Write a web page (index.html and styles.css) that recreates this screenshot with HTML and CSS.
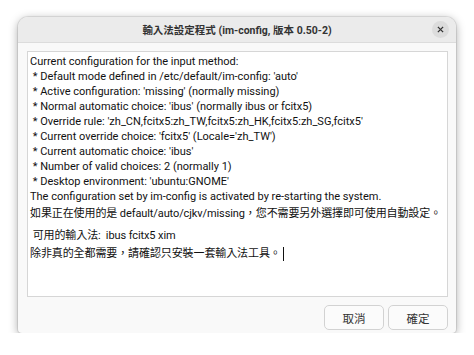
FILE: index.html
```html
<!DOCTYPE html>
<html lang="zh-TW">
<head>
    <meta charset="UTF-8">
    <title>im-config</title>
    <link rel="stylesheet" href="styles.css">
</head>
<body>
<div id="dialog">
    <div id="titlebar">
        <span id="title">輸入法設定程式 (im-config, 版本 0.50-2)</span>
        <span id="close_btn">
            <svg width="7" height="7" viewBox="0 0 8 8"><path d="M1 1L7 7M7 1L1 7" stroke="#333" stroke-width="1.5"/></svg>
        </span>
    </div>
    <div id="content">
        <div id="textview">
            <div class="line">Current configuration for the input method:</div>
            <div class="line"> * Default mode defined in /etc/default/im-config: 'auto'</div>
            <div class="line"> * Active configuration: 'missing' (normally missing)</div>
            <div class="line"> * Normal automatic choice: 'ibus' (normally ibus or fcitx5)</div>
            <div class="line"> * Override rule: 'zh_CN,fcitx5:zh_TW,fcitx5:zh_HK,fcitx5:zh_SG,fcitx5'</div>
            <div class="line"> * Current override choice: 'fcitx5' (Locale='zh_TW')</div>
            <div class="line"> * Current automatic choice: 'ibus'</div>
            <div class="line"> * Number of valid choices: 2 (normally 1)</div>
            <div class="line"> * Desktop environment: 'ubuntu:GNOME'</div>
            <div class="line">The configuration set by im-config is activated by re-starting the system.</div>
            <div class="line cjk">如果正在使用的是 default/auto/cjkv/missing，您不需要另外選擇即可使用自動設定。</div>
            <div class="line cjk tall"> 可用的輸入法:  ibus fcitx5 xim</div>
            <div class="line cjk last">除非真的全都需要，請確認只安裝一套輸入法工具。<span class="caret"></span></div>
        </div>
        <div id="buttons">
            <span class="btn">取消</span>
            <span class="btn">確定</span>
        </div>
    </div>
</div>
</body>
</html>
```

FILE: styles.css
```css
body {
    margin: 0;
    background-color: #ffffff;
    font-family: Roboto, "Noto Sans CJK TC", sans-serif;
    color: #2e2e2e;
}

#dialog {
    margin: 17px 0 0 18px;
    width: 438px;
    height: 316px;
    background-color: #f9f9f9;
    border-radius: 10px 10px 4px 4px;
    box-shadow: 0 2px 10px rgba(0, 0, 0, 0.35), 0 0 0 1px rgba(0, 0, 0, 0.08);
    display: flex;
    flex-direction: column;
    overflow: hidden;
}

#titlebar {
    height: 25px;
    background-color: #ebebeb;
    border-bottom: 1px solid #dcdcdc;
    display: flex;
    align-items: center;
    justify-content: center;
    position: relative;
}

#title {
    font-weight: bold;
    font-size: 10.5px;
    color: #333;
}

#close_btn {
    position: absolute;
    right: 7px;
    top: 4px;
    width: 17px;
    height: 17px;
    border-radius: 50%;
    background-color: #dcdcdc;
    display: flex;
    align-items: center;
    justify-content: center;
}

#content {
    padding: 8px 8px 0 9px;
    display: flex;
    flex-direction: column;
}

#textview {
    height: 240px;
    background-color: #ffffff;
    border: 1px solid #d6d6d6;
    padding: 2px;
    font-size: 11px;
    color: #111;
}

.line {
    height: 15px;
    line-height: 15px;
    white-space: pre;
}

.cjk {
    height: 18px;
    line-height: 18px;
    margin-top: 1px;
    letter-spacing: -0.1px;
}

.tall {
    height: 22px;
    line-height: 22px;
    margin-top: 2px;
}

.last {
    height: 14px;
    line-height: 14px;
    margin-top: 0;
}

.caret {
    display: inline-block;
    width: 1px;
    height: 14px;
    background-color: #111;
    vertical-align: middle;
    margin-left: 2px;
}

#buttons {
    display: flex;
    justify-content: flex-end;
    gap: 4px;
    margin-top: 8px;
}

.btn {
    width: 58px;
    height: 23px;
    border: 1px solid #d2d2d2;
    border-radius: 5px;
    background-color: #fbfbfb;
    display: flex;
    align-items: center;
    justify-content: center;
    font-size: 11.5px;
    color: #333;
}
```
